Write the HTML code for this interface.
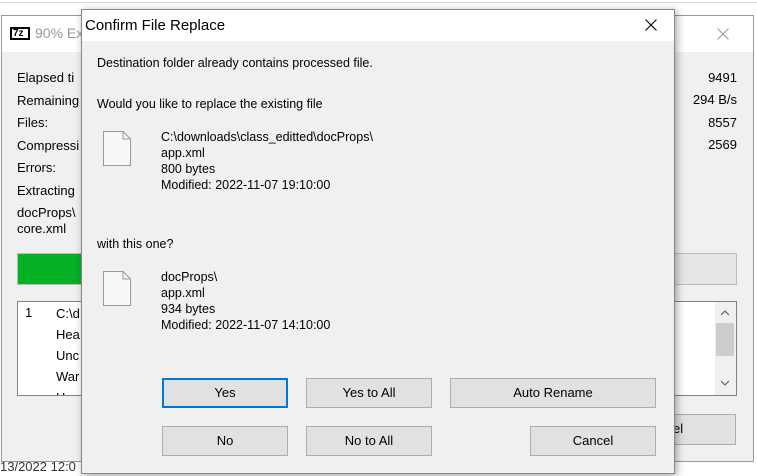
<!DOCTYPE html>
<html><head><style>
*{margin:0;padding:0;box-sizing:border-box}
body{width:757px;height:476px;background:#fff;position:relative;overflow:hidden;font-family:"Liberation Sans",sans-serif;font-size:12px;color:#000}
.a{position:absolute;white-space:nowrap}
.btn{position:absolute;background:#e1e1e1;border:1px solid #adadad;text-align:center;font-size:13px;line-height:28px}
.ic{position:absolute;width:28px;height:35px}
</style></head><body>
<div class="a" style="left:0;top:2px;width:757px;height:1px;background:#ddd"></div>
<!-- back window -->
<div class="a" style="left:1px;top:15px;width:753px;height:447px;background:#f0f0f0;border:1px solid #999"></div>
<div class="a" style="left:2px;top:16px;width:751px;height:36px;background:#fff"></div>
<div class="a" style="left:10px;top:27px;width:20px;height:13px;border:2px solid #000;font-size:10px;font-weight:bold;line-height:9px;padding-left:1px">7z</div>
<div class="a" style="left:35px;top:25px;font-size:14px;color:#999">90% Ex</div>
<svg class="a" style="left:717px;top:28px" width="12" height="12"><path d="M0.5 0.5L11.5 11.5M11.5 0.5L0.5 11.5" stroke="#999" stroke-width="1"/></svg>
<div class="a" style="left:17px;top:67px;font-size:13px;line-height:22.5px">Elapsed ti<br>Remaining<br>Files:<br>Compressi<br>Errors:<br>Extracting</div>
<div class="a" style="left:17px;top:205px;font-size:13px;line-height:16px">docProps\<br>core.xml</div>
<div class="a" style="left:600px;top:67px;width:137px;text-align:right;font-size:13px;line-height:22.3px">9491<br>294 B/s<br>8557<br>2569</div>
<div class="a" style="left:17px;top:253px;width:720px;height:32px;background:#e6e6e6;border:1px solid #bcbcbc"></div>
<div class="a" style="left:18px;top:254px;width:70px;height:30px;background:#06b025"></div>
<div class="a" style="left:17px;top:301px;width:720px;height:95px;background:#fff;border:1px solid #828282"></div>
<div class="a" style="left:715px;top:302px;width:21px;height:93px;background:#f0f0f0"></div>
<div class="a" style="left:716px;top:323px;width:18px;height:33px;background:#cdcdcd"></div>
<svg class="a" style="left:720px;top:310px" width="10" height="6"><path d="M1 5L5 1L9 5" fill="none" stroke="#555"/></svg>
<svg class="a" style="left:720px;top:380px" width="10" height="6"><path d="M1 1L5 5L9 1" fill="none" stroke="#555"/></svg>
<div class="a" style="left:25px;top:305px;font-size:13px">1</div>
<div class="a" style="left:56px;top:303px;font-size:13px;line-height:21px;height:92px;overflow:hidden">C:\d<br>Hea<br>Unc<br>War<br>Hea</div>
<div class="btn" style="left:600px;top:414px;width:136px;height:31px;text-align:left;padding-left:72px">el</div>
<div class="a" style="left:0;top:459px;font-size:13px;color:#333">13/2022 12:0</div>
<!-- dialog -->
<div class="a" style="left:81px;top:9px;width:594px;height:465px;background:#f0f0f0;border:1px solid #888;box-shadow:2px 2px 8px rgba(0,0,0,.35)"></div>
<div class="a" style="left:82px;top:10px;width:592px;height:31px;background:#fff"></div>
<div class="a" style="left:85px;top:17px;font-size:15px">Confirm File Replace</div>
<svg class="a" style="left:645px;top:19px" width="12" height="12"><path d="M0.5 0.5L11.5 11.5M11.5 0.5L0.5 11.5" stroke="#000" stroke-width="1.1"/></svg>
<div class="a" style="left:97px;top:56px;font-size:12.5px">Destination folder already contains processed file.</div>
<div class="a" style="left:97px;top:97px;font-size:12.5px">Would you like to replace the existing file</div>
<svg class="ic" style="left:103px;top:131px" viewBox="0 0 28 35"><path d="M0.5 0.5H20L27.5 8V34.5H0.5Z" fill="#f8f8f8" stroke="#999"/><path d="M20 0.5V8H27.5" fill="none" stroke="#999"/></svg>
<div class="a" style="left:161px;top:129px;font-size:12.5px;line-height:16px">C:\downloads\class_editted\docProps\<br>app.xml<br>800 bytes<br>Modified: 2022-11-07 19:10:00</div>
<div class="a" style="left:97px;top:237px;font-size:12.5px">with this one?</div>
<svg class="ic" style="left:103px;top:271px" viewBox="0 0 28 35"><path d="M0.5 0.5H20L27.5 8V34.5H0.5Z" fill="#f8f8f8" stroke="#999"/><path d="M20 0.5V8H27.5" fill="none" stroke="#999"/></svg>
<div class="a" style="left:161px;top:269px;font-size:12.5px;line-height:16px">docProps\<br>app.xml<br>934 bytes<br>Modified: 2022-11-07 14:10:00</div>
<div class="btn" style="left:162px;top:378px;width:126px;height:30px;border:2px solid #0078d7;line-height:26px">Yes</div>
<div class="btn" style="left:306px;top:378px;width:126px;height:30px">Yes to All</div>
<div class="btn" style="left:450px;top:378px;width:206px;height:30px">Auto Rename</div>
<div class="btn" style="left:162px;top:426px;width:126px;height:30px">No</div>
<div class="btn" style="left:306px;top:426px;width:126px;height:30px">No to All</div>
<div class="btn" style="left:530px;top:426px;width:126px;height:30px">Cancel</div>
</body></html>
